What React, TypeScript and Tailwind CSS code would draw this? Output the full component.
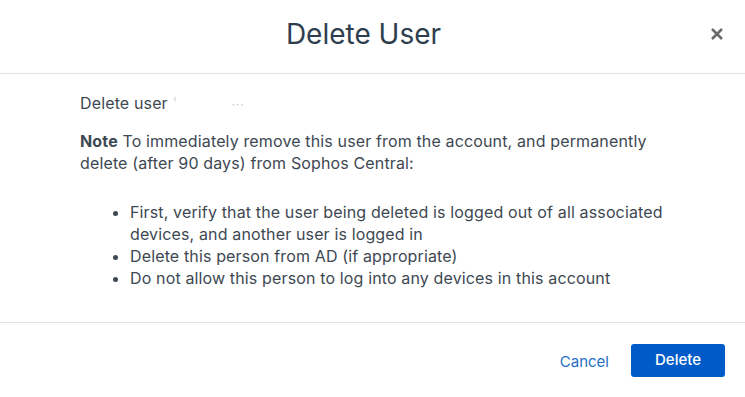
import React from 'react';

const App = () => {
  return (
    <div className="w-[745px] h-[397px] bg-white flex flex-col font-['Inter','Noto_Sans',sans-serif] text-[#3d4852]">
      <div className="relative h-[74px] border-b border-[#dcdfe3] flex items-center justify-center shrink-0">
        <h1 className="text-[28px] text-[#2e3e4e] leading-none -mt-[5px] -ml-[18px]">Delete User</h1>
        <button className="absolute right-[18px] top-[24px] w-[20px] h-[20px] flex items-center justify-center text-[#6b6b6b]">
          <svg width="14" height="14" viewBox="0 0 14 14">
            <path d="M2 2 L12 12 M12 2 L2 12" stroke="currentColor" strokeWidth="2.6" strokeLinecap="butt" />
          </svg>
        </button>
      </div>

      <div className="flex-1 px-20 pt-[18px] text-[16px] leading-[22px] tracking-[0.14px]">
        <p>
          Delete user <span className="text-[#d8dbe0]">'</span>
          <span className="text-[#c9ccd1] ml-[54px] text-[12px] tracking-[1px]">···</span>
        </p>
        <p className="mt-[14px]">
          <span className="font-bold">Note</span> To immediately remove this user from the account, and permanently delete (after 90 days) from Sophos Central:
        </p>
        <ul className="list-disc pl-[50px] mt-[27px]">
          <li>First, verify that the user being deleted is logged out of all associated devices, and another user is logged in</li>
          <li>Delete this person from AD (if appropriate)</li>
          <li>Do not allow this person to log into any devices in this account</li>
        </ul>
      </div>

      <div className="h-[75px] border-t border-[#dcdfe3] flex items-center justify-end gap-[22px] pr-[20px] shrink-0">
        <button className="text-[15px] text-[#1f6fc5] mt-[4px]">Cancel</button>
        <button className="w-[94px] h-[33px] rounded-[3px] bg-[#005bc8] text-white text-[15px] font-medium">Delete</button>
      </div>
    </div>
  );
};

export default App;
